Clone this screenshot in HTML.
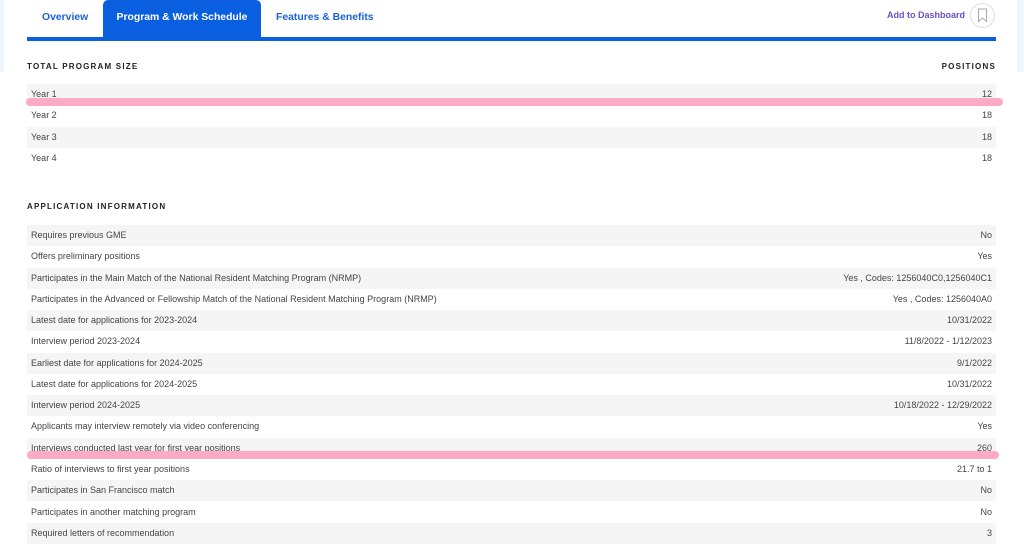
<!DOCTYPE html>
<html><head><meta charset="utf-8"><style>
*{margin:0;padding:0;box-sizing:border-box}
body{width:1024px;height:560px;background:#fff;font-family:"Liberation Sans",Arial,sans-serif;position:relative;overflow:hidden}
.abs{position:absolute}
.tab{position:absolute;top:0;height:37px;line-height:36px;font-size:10.4px;font-weight:bold;color:#1a63d8}
.h{position:absolute;left:27px;font-size:8px;font-weight:bold;letter-spacing:1.2px;color:#222}
.row{position:absolute;left:27px;width:969px;height:21.3px;font-size:9px;color:#444;line-height:21px}
.row.s{background:#f5f5f5}
.row span{position:absolute;left:4px}
.row b{position:absolute;right:4px;font-weight:normal}
.pink{position:absolute;height:8px;border-radius:4px;background:#fcaac6}
</style></head><body>
<div class="abs" style="left:1017px;top:0;width:7px;height:72px;background:#f0f5fb"></div>
<div class="abs" style="left:0;top:0;width:4px;height:72px;background:#f0f5fb"></div>
<div class="tab" style="left:42px">Overview</div>
<div class="tab" style="left:103px;width:158px;background:#0a5fe0;color:#fff;text-align:center;border-radius:5px 5px 0 0">Program &amp; Work Schedule</div>
<div class="tab" style="left:276px">Features &amp; Benefits</div>
<div class="abs" style="left:887px;top:10px;font-size:9px;font-weight:bold;color:#6a4fc8">Add to Dashboard</div>
<div class="abs" style="left:970px;top:3px;width:25px;height:25px;border:1px solid #ddd;border-radius:50%"></div>
<svg class="abs" style="left:977px;top:8px" width="11" height="15" viewBox="0 0 11 15"><path d="M1.5 1h8v12.5l-4-3.5-4 3.5z" fill="none" stroke="#aaa" stroke-width="1"/></svg>
<div class="abs" style="left:27px;top:37px;width:969px;height:4px;background:#0a5fe0"></div>
<div class="h" style="top:62px">TOTAL PROGRAM SIZE</div>
<div class="h" style="top:62px;left:auto;right:28px">POSITIONS</div>
<div class="row s" style="top:84px"><span>Year 1</span><b>12</b></div>
<div class="row" style="top:105.3px"><span>Year 2</span><b>18</b></div>
<div class="row s" style="top:126.6px"><span>Year 3</span><b>18</b></div>
<div class="row" style="top:148px"><span>Year 4</span><b>18</b></div>
<div class="h" style="top:202px">APPLICATION INFORMATION</div>
<div class="row s" style="top:225px"><span>Requires previous GME</span><b>No</b></div>
<div class="row" style="top:246.3px"><span>Offers preliminary positions</span><b>Yes</b></div>
<div class="row s" style="top:267.5px"><span>Participates in the Main Match of the National Resident Matching Program (NRMP)</span><b>Yes , Codes: 1256040C0,1256040C1</b></div>
<div class="row" style="top:288.8px"><span>Participates in the Advanced or Fellowship Match of the National Resident Matching Program (NRMP)</span><b>Yes , Codes: 1256040A0</b></div>
<div class="row s" style="top:310px"><span>Latest date for applications for 2023-2024</span><b>10/31/2022</b></div>
<div class="row" style="top:331.3px"><span>Interview period 2023-2024</span><b>11/8/2022 - 1/12/2023</b></div>
<div class="row s" style="top:352.6px"><span>Earliest date for applications for 2024-2025</span><b>9/1/2022</b></div>
<div class="row" style="top:373.9px"><span>Latest date for applications for 2024-2025</span><b>10/31/2022</b></div>
<div class="row s" style="top:395.2px"><span>Interview period 2024-2025</span><b>10/18/2022 - 12/29/2022</b></div>
<div class="row" style="top:416.4px"><span>Applicants may interview remotely via video conferencing</span><b>Yes</b></div>
<div class="row s" style="top:437.7px"><span>Interviews conducted last year for first year positions</span><b>260</b></div>
<div class="row" style="top:459px"><span>Ratio of interviews to first year positions</span><b>21.7 to 1</b></div>
<div class="row s" style="top:480.2px"><span>Participates in San Francisco match</span><b>No</b></div>
<div class="row" style="top:501.5px"><span>Participates in another matching program</span><b>No</b></div>
<div class="row s" style="top:522.8px"><span>Required letters of recommendation</span><b>3</b></div>
<div class="pink" style="left:26px;top:98px;width:977px"></div>
<div class="pink" style="left:27px;top:451px;width:972px"></div>
</body></html>
